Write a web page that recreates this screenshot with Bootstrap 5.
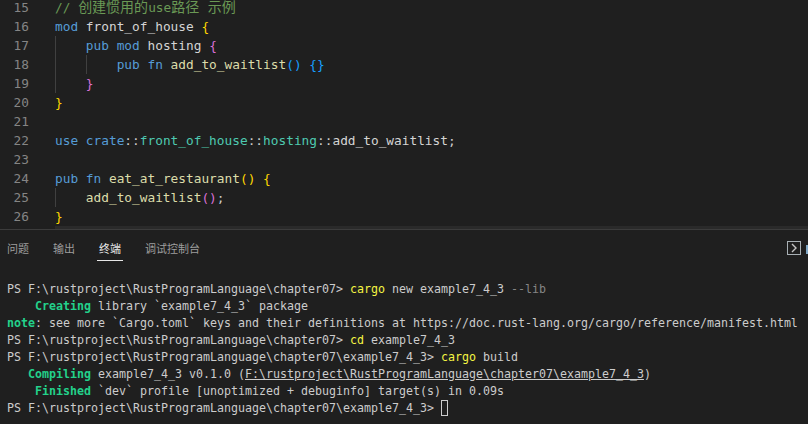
<!DOCTYPE html>
<html lang="zh-CN"><head><meta charset="utf-8">
<title>VS Code</title>
<link href="https://cdn.jsdelivr.net/npm/bootstrap@5.3.0/dist/css/bootstrap.min.css" rel="stylesheet">
<style>
html,body{height:424px;overflow:hidden;background:#1f1f1f}
.shell{width:808px;height:424px;background:#1f1f1f;overflow:hidden}
.editor{height:230px;overflow:hidden;position:relative;border-bottom:1px solid #3c3c3c;font:12.8px/19px "DejaVu Sans Mono","Noto Sans CJK SC",monospace;color:#ccc}
.hbar{position:absolute;left:55px;right:0;bottom:0;height:3px;background:#2a2a2a}
.lines{margin-top:-2px}
.ln{height:19px;white-space:pre}
.num{width:29px;text-align:right;color:#858585;flex:none}
.code{margin-left:26px;position:relative}
.guide{position:absolute;top:0;bottom:0;width:1px;background:#404040}
.g1{left:0}.g2{left:31px}
.kw{color:#569cd6}.fn{color:#dcdcaa}.id{color:#d4d4d4}.ty{color:#4ec9b0}.cm{color:#6a9955}
.cjk{font-size:14px}
.b1{color:#ffd700}.b2{color:#da70d6}.b3{color:#179fff}
.tabs{height:34px;font:11px/1 "Noto Sans CJK SC",sans-serif;color:#9d9d9d;padding:0 0 0 7px}
.tabitem{height:23px;padding-top:5px}
.tabitem.on{color:#e7e7e7;border-bottom:1px solid #e7e7e7;padding:5px 2px 0;margin:0 -2px}
.termbtn{width:14px;height:14px;border:1px solid #a8b0b5;margin-left:auto;flex:none;margin-top:3px}
.nextbtn{width:2px;height:9px;background:#7fa6c4;margin-left:-19px;margin-right:0;margin-top:7px;flex:none}
.term{margin-top:17px;padding-left:7px;font:11.63px/17px "DejaVu Sans Mono",monospace;color:#ccc}
.tl{height:17px;white-space:pre}
.ok{color:#23d18b;font-weight:700}.cmd{color:#f5f543}.dim{color:#858585}.ul{text-decoration:underline}
.cur{display:inline-block;width:7px;height:16px;border:1px solid #ccc;vertical-align:-4px}
</style></head><body>
<div class="shell d-flex flex-column">
<div class="editor"><div class="lines">
<div class="ln d-flex"><span class="num">15</span><span class="code cm">// <span class="cjk">创建惯用的</span>use<span class="cjk">路径 示例</span></span></div>
<div class="ln d-flex"><span class="num">16</span><span class="code"><span class="kw">mod</span> <span class="id">front_of_house</span> <span class="b1">{</span></span></div>
<div class="ln d-flex"><span class="num">17</span><span class="code"><i class="guide g1"></i>    <span class="kw">pub mod</span> <span class="id">hosting</span> <span class="b2">{</span></span></div>
<div class="ln d-flex"><span class="num">18</span><span class="code"><i class="guide g1"></i><i class="guide g2"></i>        <span class="kw">pub fn</span> <span class="fn">add_to_waitlist</span><span class="b3">() {}</span></span></div>
<div class="ln d-flex"><span class="num">19</span><span class="code"><i class="guide g1"></i>    <span class="b2">}</span></span></div>
<div class="ln d-flex"><span class="num">20</span><span class="code"><span class="b1">}</span></span></div>
<div class="ln d-flex"><span class="num">21</span></div>
<div class="ln d-flex"><span class="num">22</span><span class="code"><span class="kw">use crate</span>::<span class="ty">front_of_house</span>::<span class="ty">hosting</span>::<span class="id">add_to_waitlist</span>;</span></div>
<div class="ln d-flex"><span class="num">23</span></div>
<div class="ln d-flex"><span class="num">24</span><span class="code"><span class="kw">pub fn</span> <span class="fn">eat_at_restaurant</span><span class="b1">()</span> <span class="b1">{</span></span></div>
<div class="ln d-flex"><span class="num">25</span><span class="code"><i class="guide g1"></i>    <span class="fn">add_to_waitlist</span><span class="b2">()</span>;</span></div>
<div class="ln d-flex"><span class="num">26</span><span class="code"><span class="b1">}</span></span></div>
</div><div class="hbar"></div></div>
<div class="tabs d-flex align-items-start pt-2 gap-4">
<span class="tabitem">问题</span><span class="tabitem">输出</span><span class="tabitem on">终端</span><span class="tabitem">调试控制台</span>
<span class="termbtn d-flex align-items-center justify-content-center"><svg width="8" height="10" viewBox="0 0 8 10"><path d="M2 1l4 4-4 4" fill="none" stroke="#c5c5c5" stroke-width="1.4"/></svg></span>
<span class="nextbtn"></span>
</div>
<div class="term">
<div class="tl">PS F:\rustproject\RustProgramLanguage\chapter07&gt; <span class="cmd">cargo</span> new example7_4_3 <span class="dim">--lib</span></div>
<div class="tl">    <span class="ok">Creating</span> library `example7_4_3` package</div>
<div class="tl"><span class="ok">note</span>: see more `Cargo.toml` keys and their definitions at https://doc.rust-lang.org/cargo/reference/manifest.html</div>
<div class="tl">PS F:\rustproject\RustProgramLanguage\chapter07&gt; <span class="cmd">cd</span> example7_4_3</div>
<div class="tl">PS F:\rustproject\RustProgramLanguage\chapter07\example7_4_3&gt; <span class="cmd">cargo</span> build</div>
<div class="tl">   <span class="ok">Compiling</span> example7_4_3 v0.1.0 (<span class="ul">F:\rustproject\RustProgramLanguage\chapter07\example7_4_3</span>)</div>
<div class="tl">    <span class="ok">Finished</span> `dev` profile [unoptimized + debuginfo] target(s) in 0.09s</div>
<div class="tl">PS F:\rustproject\RustProgramLanguage\chapter07\example7_4_3&gt; <span class="cur"></span></div>
</div>
</div>
<script src="https://cdn.jsdelivr.net/npm/bootstrap@5.3.0/dist/js/bootstrap.bundle.min.js"></script>
</body></html>
